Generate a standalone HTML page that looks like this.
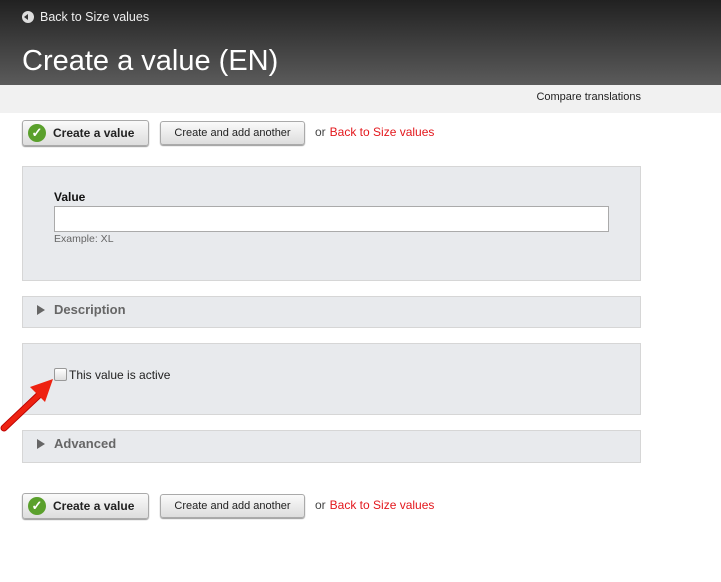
<!DOCTYPE html><html><head><style>
body{margin:0;width:721px;height:582px;background:#fff;font-family:"Liberation Sans",Arial,sans-serif;position:relative;overflow:hidden}
.hd{position:absolute;left:0;top:0;width:721px;height:85px;background:linear-gradient(#212121,#5b5b5b)}
.back{position:absolute;left:22px;top:10px;color:#eee;font-size:12.5px}
.back i{display:inline-block;width:12px;height:12px;border-radius:50%;background:#ddd;vertical-align:-2px;margin-right:6px;position:relative}
.back i:after{content:"";position:absolute;left:2px;top:3px;border:3px solid transparent;border-right:4px solid #333;border-left:0}
h1{position:absolute;left:22px;top:45px;margin:0;font-weight:normal;color:#fff;font-size:29px}
.bar{position:absolute;top:85px;left:0;width:721px;height:28px;background:#f1f1f1}
.bar span{position:absolute;right:80px;top:6px;font-size:11px;color:#222}
.b1{position:absolute;left:22px;width:125px;height:24px;border:1px solid #aaa;border-radius:3px;background:linear-gradient(#fafafa,#ddd);box-shadow:0 1px 1px #999;font-size:12px;font-weight:bold;color:#222}
.b1 i{position:absolute;left:5px;top:3px;width:18px;height:18px;border-radius:50%;background:#5aa02c;color:#fff;font-style:normal;font-size:13px;text-align:center;line-height:18px}
.b1 span{position:absolute;left:30px;top:5px}
.b2{position:absolute;left:160px;width:143px;height:22px;border:1px solid #aaa;border-radius:3px;background:linear-gradient(#fafafa,#ddd);box-shadow:0 1px 1px #999;font-size:11px;color:#222;text-align:center;line-height:22px}
.or{position:absolute;left:315px;font-size:12px;color:#444}
.or a{color:#e3171c;margin-left:4px}
.box{position:absolute;left:22px;width:617px;background:#e8eaed;border:1px solid #d6d6d6}
.sec{font-weight:bold;color:#666;font-size:13px;position:absolute;left:31px;top:5px}
.tri{position:absolute;left:14px;top:8px;border:5px solid transparent;border-left:8px solid #666;border-right:0}
</style></head><body>
<div class="hd"><div class="back"><i></i>Back to Size values</div><h1>Create a value (EN)</h1></div>
<div class="bar"><span>Compare translations</span></div>
<div class="b1" style="top:120px"><i>✓</i><span>Create a value</span></div>
<div class="b2" style="top:121px">Create and add another</div>
<div class="or" style="top:125px">or<a>Back to Size values</a></div>
<div class="box" style="top:166px;height:113px">
<div style="position:absolute;left:31px;top:23px;font-size:12px;font-weight:bold;color:#111">Value</div>
<div style="position:absolute;left:31px;top:39px;width:553px;height:24px;background:#fff;border:1px solid #aaa"></div>
<div style="position:absolute;left:31px;top:66px;font-size:10.5px;color:#666">Example: XL</div>
</div>
<div class="box" style="top:296px;height:30px"><div class="tri"></div><div class="sec">Description</div></div>
<div class="box" style="top:343px;height:70px">
<div style="position:absolute;left:31px;top:24px;width:11px;height:11px;border:1px solid #999;border-radius:2px;background:linear-gradient(#fff,#ddd)"></div>
<div style="position:absolute;left:46px;top:24px;font-size:12px;color:#222">This value is active</div>
</div>
<svg style="position:absolute;left:0;top:366px" width="60" height="70"><path d="M4 62 L40 28" stroke="#b00" stroke-width="7" stroke-linecap="round"/><path d="M4 62 L40 28" stroke="#e21" stroke-width="5" stroke-linecap="round"/><polygon points="53,13 30,21 45,36" fill="#e21"/></svg>
<div class="box" style="top:430px;height:31px"><div class="tri"></div><div class="sec">Advanced</div></div>
<div class="b1" style="top:493px"><i>✓</i><span>Create a value</span></div>
<div class="b2" style="top:494px">Create and add another</div>
<div class="or" style="top:498px">or<a>Back to Size values</a></div>
</body></html>
